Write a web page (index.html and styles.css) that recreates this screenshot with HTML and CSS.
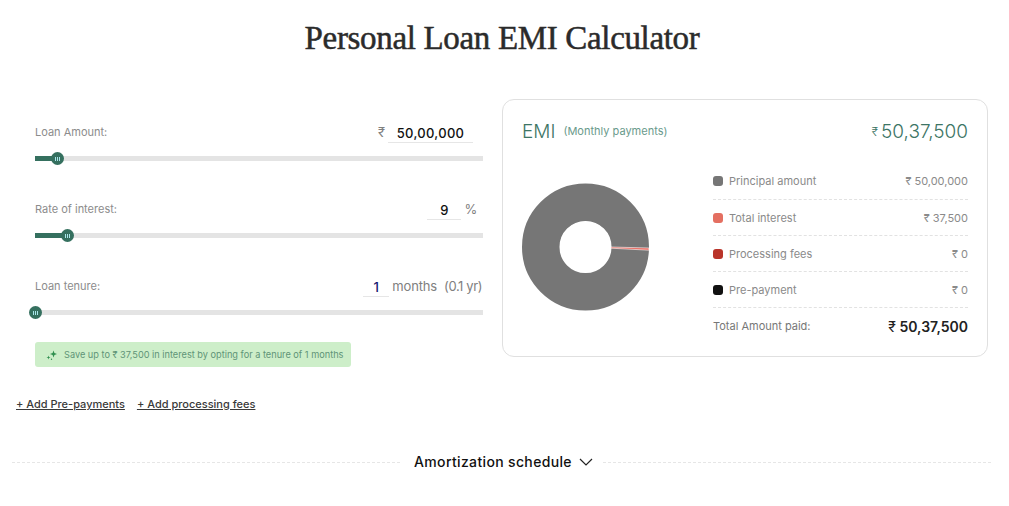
FILE: index.html
```html
<!DOCTYPE html>
<html lang="en">
<head>
    <meta charset="UTF-8">
    <meta name="viewport" content="width=device-width, initial-scale=1.0">
    <title>Personal Loan EMI Calculator</title>
    <link rel="stylesheet" href="styles.css">
</head>
<body>
    <h1>Personal Loan EMI Calculator</h1>
    <div class="calculator">
        <div class="inputs">
            <!-- Loan amount -->
            <div class="field">
                <div class="field-head">
                    <span class="field-label">Loan Amount:</span>
                    <div class="field-value">
                        <span class="unit rupee">₹</span>
                        <span class="value-box amount-box">50,00,000</span>
                    </div>
                </div>
                <div class="slider">
                    <div class="slider-fill" style="width: 5%"></div>
                    <div class="slider-thumb"><i></i><i></i><i></i></div>
                </div>
            </div>
            <!-- Rate -->
            <div class="field">
                <div class="field-head">
                    <span class="field-label">Rate of interest:</span>
                    <div class="field-value">
                        <span class="value-box rate-box">9</span>
                        <span class="unit percent">%</span>
                    </div>
                </div>
                <div class="slider">
                    <div class="slider-fill" style="width: 7.2%"></div>
                    <div class="slider-thumb"><i></i><i></i><i></i></div>
                </div>
            </div>
            <!-- Tenure -->
            <div class="field">
                <div class="field-head">
                    <span class="field-label">Loan tenure:</span>
                    <div class="field-value">
                        <span class="value-box tenure-box">1</span>
                        <span class="unit months">months</span>
                        <span class="unit years">(0.1 yr)</span>
                    </div>
                </div>
                <div class="slider">
                    <div class="slider-fill" style="width: 0"></div>
                    <div class="slider-thumb"><i></i><i></i><i></i></div>
                </div>
            </div>
            <div class="tip">
                <svg class="tip-icon" width="12" height="12" viewBox="0 0 12 12" fill="#2f8f4e">
                    <path d="M7.5 1.5 L8.4 4.1 L11 5 L8.4 5.9 L7.5 8.5 L6.6 5.9 L4 5 L6.6 4.1 Z"/>
                    <path d="M2.5 6.5 L3 8 L4.5 8.5 L3 9 L2.5 10.5 L2 9 L.5 8.5 L2 8 Z"/>
                    <circle cx="5.5" cy="10.2" r=".7"/>
                </svg>
                <span>Save up to ₹ 37,500 in interest by opting for a tenure of 1 months</span>
            </div>
        </div>

        <div class="card">
            <div class="card-head">
                <div class="emi-title">
                    <span class="emi-label">EMI</span>
                    <span class="emi-note">(Monthly payments)</span>
                </div>
                <div class="emi-total"><span class="emi-rupee">₹</span>50,37,500</div>
            </div>
            <div class="card-body">
                <svg class="pie" width="128" height="128" viewBox="0 0 128 128">
                    <circle cx="63.5" cy="64" r="44.75" fill="none" stroke="#767676" stroke-width="37.5"/>
                    <path d="M89 64 L127 65 L126.9 67.2 L89 65.2 Z" fill="#e8645a" stroke="#fff" stroke-width=".6"/>
                    <circle cx="63.5" cy="64" r="25.5" fill="#fff"/>
                </svg>
                <div class="legend">
                    <div class="legend-row first-row">
                        <span class="dot dot-principal"></span>
                        <span class="legend-name">Principal amount</span>
                        <span class="legend-value">₹ 50,00,000</span>
                    </div>
                    <div class="legend-row">
                        <span class="dot dot-interest"></span>
                        <span class="legend-name">Total interest</span>
                        <span class="legend-value">₹ 37,500</span>
                    </div>
                    <div class="legend-row">
                        <span class="dot dot-fees"></span>
                        <span class="legend-name">Processing fees</span>
                        <span class="legend-value">₹ 0</span>
                    </div>
                    <div class="legend-row">
                        <span class="dot dot-prepay"></span>
                        <span class="legend-name">Pre-payment</span>
                        <span class="legend-value">₹ 0</span>
                    </div>
                    <div class="legend-total">
                        <span class="total-name">Total Amount paid:</span>
                        <span class="total-value"><span class="total-rupee">₹</span> 50,37,500</span>
                    </div>
                </div>
            </div>
        </div>
    </div>

    <div class="links">
        <a href="#">+ Add Pre-payments</a>
        <a href="#">+ Add processing fees</a>
    </div>

    <div class="schedule">
        <div class="schedule-line"></div>
        <div class="schedule-title">
            <span>Amortization schedule</span>
            <svg width="14" height="8" viewBox="0 0 14 8" fill="none" stroke="#222" stroke-width="1.2">
                <path d="M1 1 L7 7 L13 1"/>
            </svg>
        </div>
        <div class="schedule-line"></div>
    </div>
</body>
</html>
```

FILE: styles.css
```css
body {
    font-family: 'Inter', 'Noto Sans', sans-serif;
    background-color: #fff;
    color: #222;
    margin: 0;
    height: 506px;
    overflow: hidden;
}
h1 {
    font-family: 'Liberation Serif', serif;
    font-size: 33px;
    font-weight: 400;
    -webkit-text-stroke: 0.5px #2b2b2b;
    letter-spacing: -0.33px;
    line-height: 38px;
    color: #2b2b2b;
    text-align: center;
    margin: 0;
    padding: 19px 5px 0 0;
}
.calculator {
    display: flex;
    gap: 19px;
    margin-top: 42px;
    padding: 0 21px 0 35px;
}
.inputs {
    width: 448px;
    padding-top: 21px;
    flex-shrink: 0;
}
.field {
    height: 77px;
}
.field-head {
    display: flex;
    justify-content: space-between;
    height: 36px;
}
.field-label {
    font-size: 11px;
    line-height: 24px;
    color: #8c8c8c;
}
.field-value {
    display: flex;
    align-items: flex-start;
}
.value-box {
    font-size: 13px;
    font-weight: 500;
    line-height: 20px;
    height: 19px;
    padding-top: 3px;
    text-align: center;
    color: #111;
    border-bottom: 1px solid #e6e6e6;
    letter-spacing: 0.3px;
}
.amount-box {
    width: 85px;
    margin: 0 10px 0 3px;
}
.rate-box {
    width: 34px;
}
.tenure-box {
    width: 26px;
    color: #14146e;
}
.unit {
    font-size: 13px;
    line-height: 24px;
    color: #808080;
    letter-spacing: -0.15px;
}
.percent {
    margin: 0 6px 0 3px;
}
.months {
    margin-left: 3px;
}
.years {
    margin-left: 7px;
    margin-right: 1px;
    letter-spacing: -0.4px;
}
.slider {
    position: relative;
    height: 5px;
    background: #e4e4e4;
}
.slider-fill {
    height: 100%;
    background: #35705f;
}
.slider-thumb {
    position: absolute;
    top: -4px;
    left: 0;
    width: 13px;
    height: 13px;
    margin-left: -6px;
    border-radius: 50%;
    background: #35705f;
    display: flex;
    align-items: center;
    justify-content: center;
    gap: 1px;
}
.slider-thumb i {
    display: block;
    width: 1px;
    height: 4px;
    background: #a9e6ea;
}
.field:nth-child(1) .slider-thumb {
    left: 5%;
}
.field:nth-child(2) .slider-thumb {
    left: 7.2%;
}
.tip {
    display: flex;
    align-items: center;
    gap: 6px;
    width: 316px;
    height: 25px;
    box-sizing: border-box;
    margin-top: -9px;
    padding-left: 11px;
    background: #cdeec9;
    border-radius: 3px;
    font-size: 9.2px;
    color: #5f9477;
    white-space: nowrap;
}
.card {
    flex: 1;
    height: 258px;
    box-sizing: border-box;
    border: 1px solid #e0e0e0;
    border-radius: 12px;
    padding: 19px 19px 0;
}
.card-head {
    display: flex;
    justify-content: space-between;
    align-items: center;
    height: 24px;
    color: #3d7565;
}
.emi-title {
    display: flex;
    align-items: center;
    gap: 8px;
}
.emi-label {
    font-size: 19px;
    font-weight: 300;
}
.emi-note {
    font-size: 11px;
    color: #6a9a8c;
}
.emi-total {
    font-size: 19px;
    font-weight: 300;
}
.emi-rupee {
    font-size: 12px;
    margin-right: 3px;
    vertical-align: 2px;
}
.card-body {
    display: flex;
    justify-content: space-between;
    margin-top: 21px;
}
.pie {
    margin-top: 19px;
}
.legend {
    width: 255px;
}
.legend-row {
    display: flex;
    align-items: center;
    height: 35px;
    border-bottom: 1px dashed #e2e2e2;
    font-size: 11px;
    color: #8a8a8a;
}
.first-row {
    box-sizing: border-box;
    height: 36px;
    padding-bottom: 2px;
}
.dot {
    width: 10px;
    height: 10px;
    border-radius: 3px;
    margin-right: 6px;
}
.dot-principal { background: #767676; }
.dot-interest { background: #e46f61; }
.dot-fees { background: #b9342a; }
.dot-prepay { background: #111; }
.legend-value {
    margin-left: auto;
}
.legend-total {
    display: flex;
    justify-content: space-between;
    align-items: center;
    height: 36px;
}
.total-name {
    font-size: 11px;
    color: #777;
}
.total-value {
    font-size: 14px;
    font-weight: 600;
    color: #222;
}
.total-rupee {
    font-weight: 400;
}
.links {
    display: flex;
    gap: 12px;
    margin-top: 29px;
    padding-left: 16px;
}
.links a {
    font-size: 11px;
    font-weight: 500;
    line-height: 16px;
    color: #3a3a3a;
}
.schedule {
    display: flex;
    align-items: center;
    gap: 10px;
    margin-top: 40px;
    padding: 0 18px 0 12px;
}
.schedule-line {
    flex: 1;
    border-top: 1px dashed #e6e6e6;
}
.schedule-title {
    display: flex;
    align-items: center;
    gap: 7px;
    margin-left: 4px;
    font-size: 14px;
    font-weight: 500;
    letter-spacing: 0.35px;
    line-height: 20px;
    color: #111;
}
```
